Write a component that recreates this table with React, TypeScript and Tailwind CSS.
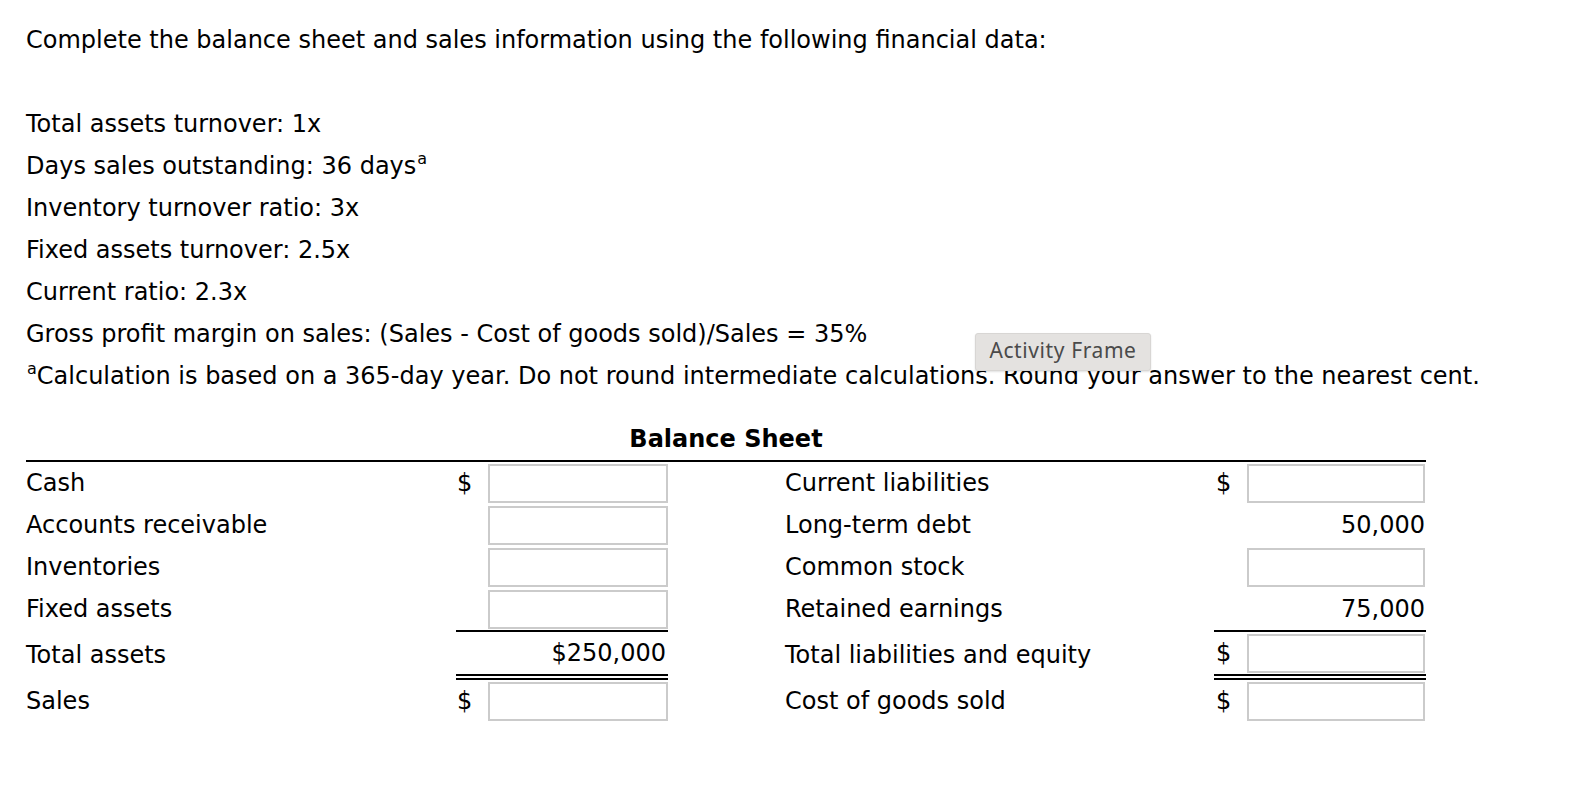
import React from "react"

const font = { fontFamily: '"DejaVu Sans", Verdana, sans-serif' }

const facts = [
  "Total assets turnover: 1x",
  "Days sales outstanding: 36 days",
  "Inventory turnover ratio: 3x",
  "Fixed assets turnover: 2.5x",
  "Current ratio: 2.3x",
  "Gross profit margin on sales: (Sales - Cost of goods sold)/Sales = 35%",
]

function Box({ right = false }: { right?: boolean }) {
  return (
    <input
      type="text"
      className={`block h-[39px] border-2 border-[#cbcbcb] bg-white outline-none px-2 ${right ? "w-[178px]" : "w-[180px] ml-[2px]"}`}
    />
  )
}

function Sup() {
  return <sup className="text-[16px] top-[-0.6em] ml-[1px]">a</sup>
}

// column cells
const c1 = "w-[430px] shrink-0"
const c2 = "w-[30px] shrink-0 pl-[1px]"
const c3 = "w-[182px] shrink-0"
const c4 = "w-[117px] shrink-0"
const c5 = "w-[429px] shrink-0"
const c6 = "w-[33px] shrink-0 pl-[2px]"
const c7 = "w-[179px] shrink-0"

type Cell = "input" | string | null

function Row({ left, lDollar, lVal, right, rDollar, rVal }: { left: string; lDollar?: boolean; lVal: Cell; right: string; rDollar?: boolean; rVal: Cell }) {
  const val = (v: Cell, isRight: boolean) => {
    if (v === "input") return <Box right={isRight} />
    if (v) return <div className={isRight ? "text-right pr-[1px]" : "text-right pr-[2px]"}>{v}</div>
    return null
  }
  return (
    <div className="flex items-center h-[42px]">
      <div className={c1}>{left}</div>
      <div className={c2}>{lDollar ? "$" : ""}</div>
      <div className={c3}>{val(lVal, false)}</div>
      <div className={c4} />
      <div className={c5}>{right}</div>
      <div className={c6}>{rDollar ? "$" : ""}</div>
      <div className={c7}>{val(rVal, true)}</div>
    </div>
  )
}

export default function App() {
  const ruled = "self-stretch flex items-center border-t-2 border-b-[6px] border-double border-black"
  return (
    <div className="relative min-h-screen bg-white text-black text-[24px] pt-[19px] pl-[26px]" style={font}>
      <p className="leading-[42px]">Complete the balance sheet and sales information using the following financial data:</p>

      <div className="mt-[42px]">
        {facts.map((f, i) => (
          <p key={i} className="leading-[42px]">
            {f}
            {i === 1 && <Sup />}
          </p>
        ))}
        <p className="leading-[42px]">
          <Sup />Calculation is based on a 365-day year. Do not round intermediate calculations. Round your answer to the nearest cent.
        </p>
      </div>

      <div
        className="absolute left-[975px] top-[333px] w-[176px] h-[38px] pb-[3px] rounded-[3px] bg-[#e4e2e0] border border-[#d8d6d4] shadow-[0_1px_2px_rgba(0,0,0,0.12)] flex items-center justify-center text-[#4a4a4a] text-[21px] tracking-[0.6px]"
        style={{ fontFamily: '"Noto Sans", "Open Sans", sans-serif' }}
      >
        Activity Frame
      </div>

      <div className="mt-[21px] w-[1400px]">
        <div className="h-[42px] leading-[42px] text-center font-bold">Balance Sheet</div>
        <div className="border-t-2 border-black">
          <Row left="Cash" lDollar lVal="input" right="Current liabilities" rDollar rVal="input" />
          <Row left="Accounts receivable" lVal="input" right="Long-term debt" rVal="50,000" />
          <Row left="Inventories" lVal="input" right="Common stock" rVal="input" />
          <Row left="Fixed assets" lVal="input" right="Retained earnings" rVal="75,000" />
          <div className="flex items-center h-[50px]">
            <div className={c1}>Total assets</div>
            <div className={`${c2} ${ruled}`} />
            <div className={`${c3} ${ruled} justify-end pr-[2px]`}>$250,000</div>
            <div className={c4} />
            <div className={c5}>Total liabilities and equity</div>
            <div className={`${c6} ${ruled}`}>$</div>
            <div className={`${c7} ${ruled}`}>
              <Box right />
            </div>
          </div>
          <Row left="Sales" lDollar lVal="input" right="Cost of goods sold" rDollar rVal="input" />
        </div>
      </div>
    </div>
  )
}
